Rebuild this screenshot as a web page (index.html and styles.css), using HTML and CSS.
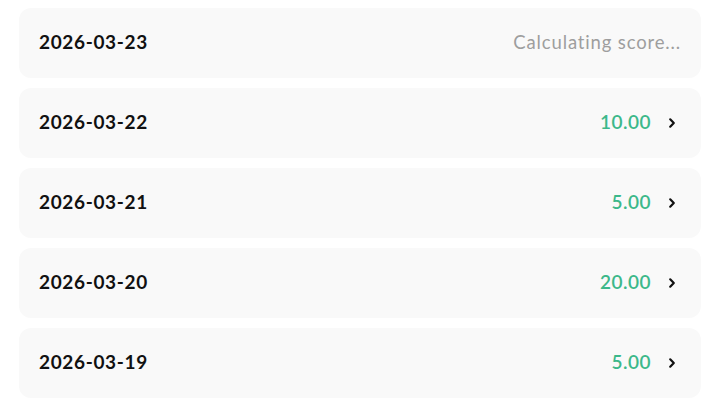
FILE: index.html
```html
<!DOCTYPE html>
<html>
<head>
<meta charset="utf-8">
<link rel="stylesheet" href="styles.css">
</head>
<body>
<div class="list">
  <div class="row">
    <span class="date">2026-03-23</span>
    <span class="pending">Calculating score...</span>
  </div>
  <div class="row">
    <span class="date">2026-03-22</span>
    <span class="right"><span class="score">10.00</span><svg class="chev" viewBox="0 0 16 16"><path d="M5.2 4.3 L8.8 8 L5.2 11.7" fill="none" stroke="#111" stroke-width="2.2" stroke-linecap="round" stroke-linejoin="round"/></svg></span>
  </div>
  <div class="row">
    <span class="date">2026-03-21</span>
    <span class="right"><span class="score">5.00</span><svg class="chev" viewBox="0 0 16 16"><path d="M5.2 4.3 L8.8 8 L5.2 11.7" fill="none" stroke="#111" stroke-width="2.2" stroke-linecap="round" stroke-linejoin="round"/></svg></span>
  </div>
  <div class="row">
    <span class="date">2026-03-20</span>
    <span class="right"><span class="score">20.00</span><svg class="chev" viewBox="0 0 16 16"><path d="M5.2 4.3 L8.8 8 L5.2 11.7" fill="none" stroke="#111" stroke-width="2.2" stroke-linecap="round" stroke-linejoin="round"/></svg></span>
  </div>
  <div class="row">
    <span class="date">2026-03-19</span>
    <span class="right"><span class="score">5.00</span><svg class="chev" viewBox="0 0 16 16"><path d="M5.2 4.3 L8.8 8 L5.2 11.7" fill="none" stroke="#111" stroke-width="2.2" stroke-linecap="round" stroke-linejoin="round"/></svg></span>
  </div>
</div>
</body>
</html>
```
FILE: styles.css
```css
html, body {
  margin: 0;
  padding: 0;
  background: #ffffff;
}
body {
  font-family: "Lato", "Noto Sans", sans-serif;
}
.list {
  display: flex;
  flex-direction: column;
  gap: 10px;
  padding: 8px 19px;
}
.row {
  height: 70px;
  box-sizing: border-box;
  background: #f9f9f9;
  border-radius: 12px;
  display: flex;
  align-items: center;
  justify-content: space-between;
  padding: 0 20px 2px 20px;
}
.date {
  font-size: 19px;
  line-height: 24px;
  font-weight: 700;
  letter-spacing: 0.65px;
  color: #111;
}
.pending {
  font-size: 18.5px;
  line-height: 24px;
  letter-spacing: 0.85px;
  color: #9e9e9e;
}
.right {
  display: flex;
  align-items: center;
  gap: 14px;
}
.score {
  font-size: 19px;
  line-height: 24px;
  font-weight: 600;
  letter-spacing: 0.5px;
  color: #3cb88a;
}
.chev {
  width: 16px;
  height: 16px;
  display: block;
  margin-top: 2px;
}
```
